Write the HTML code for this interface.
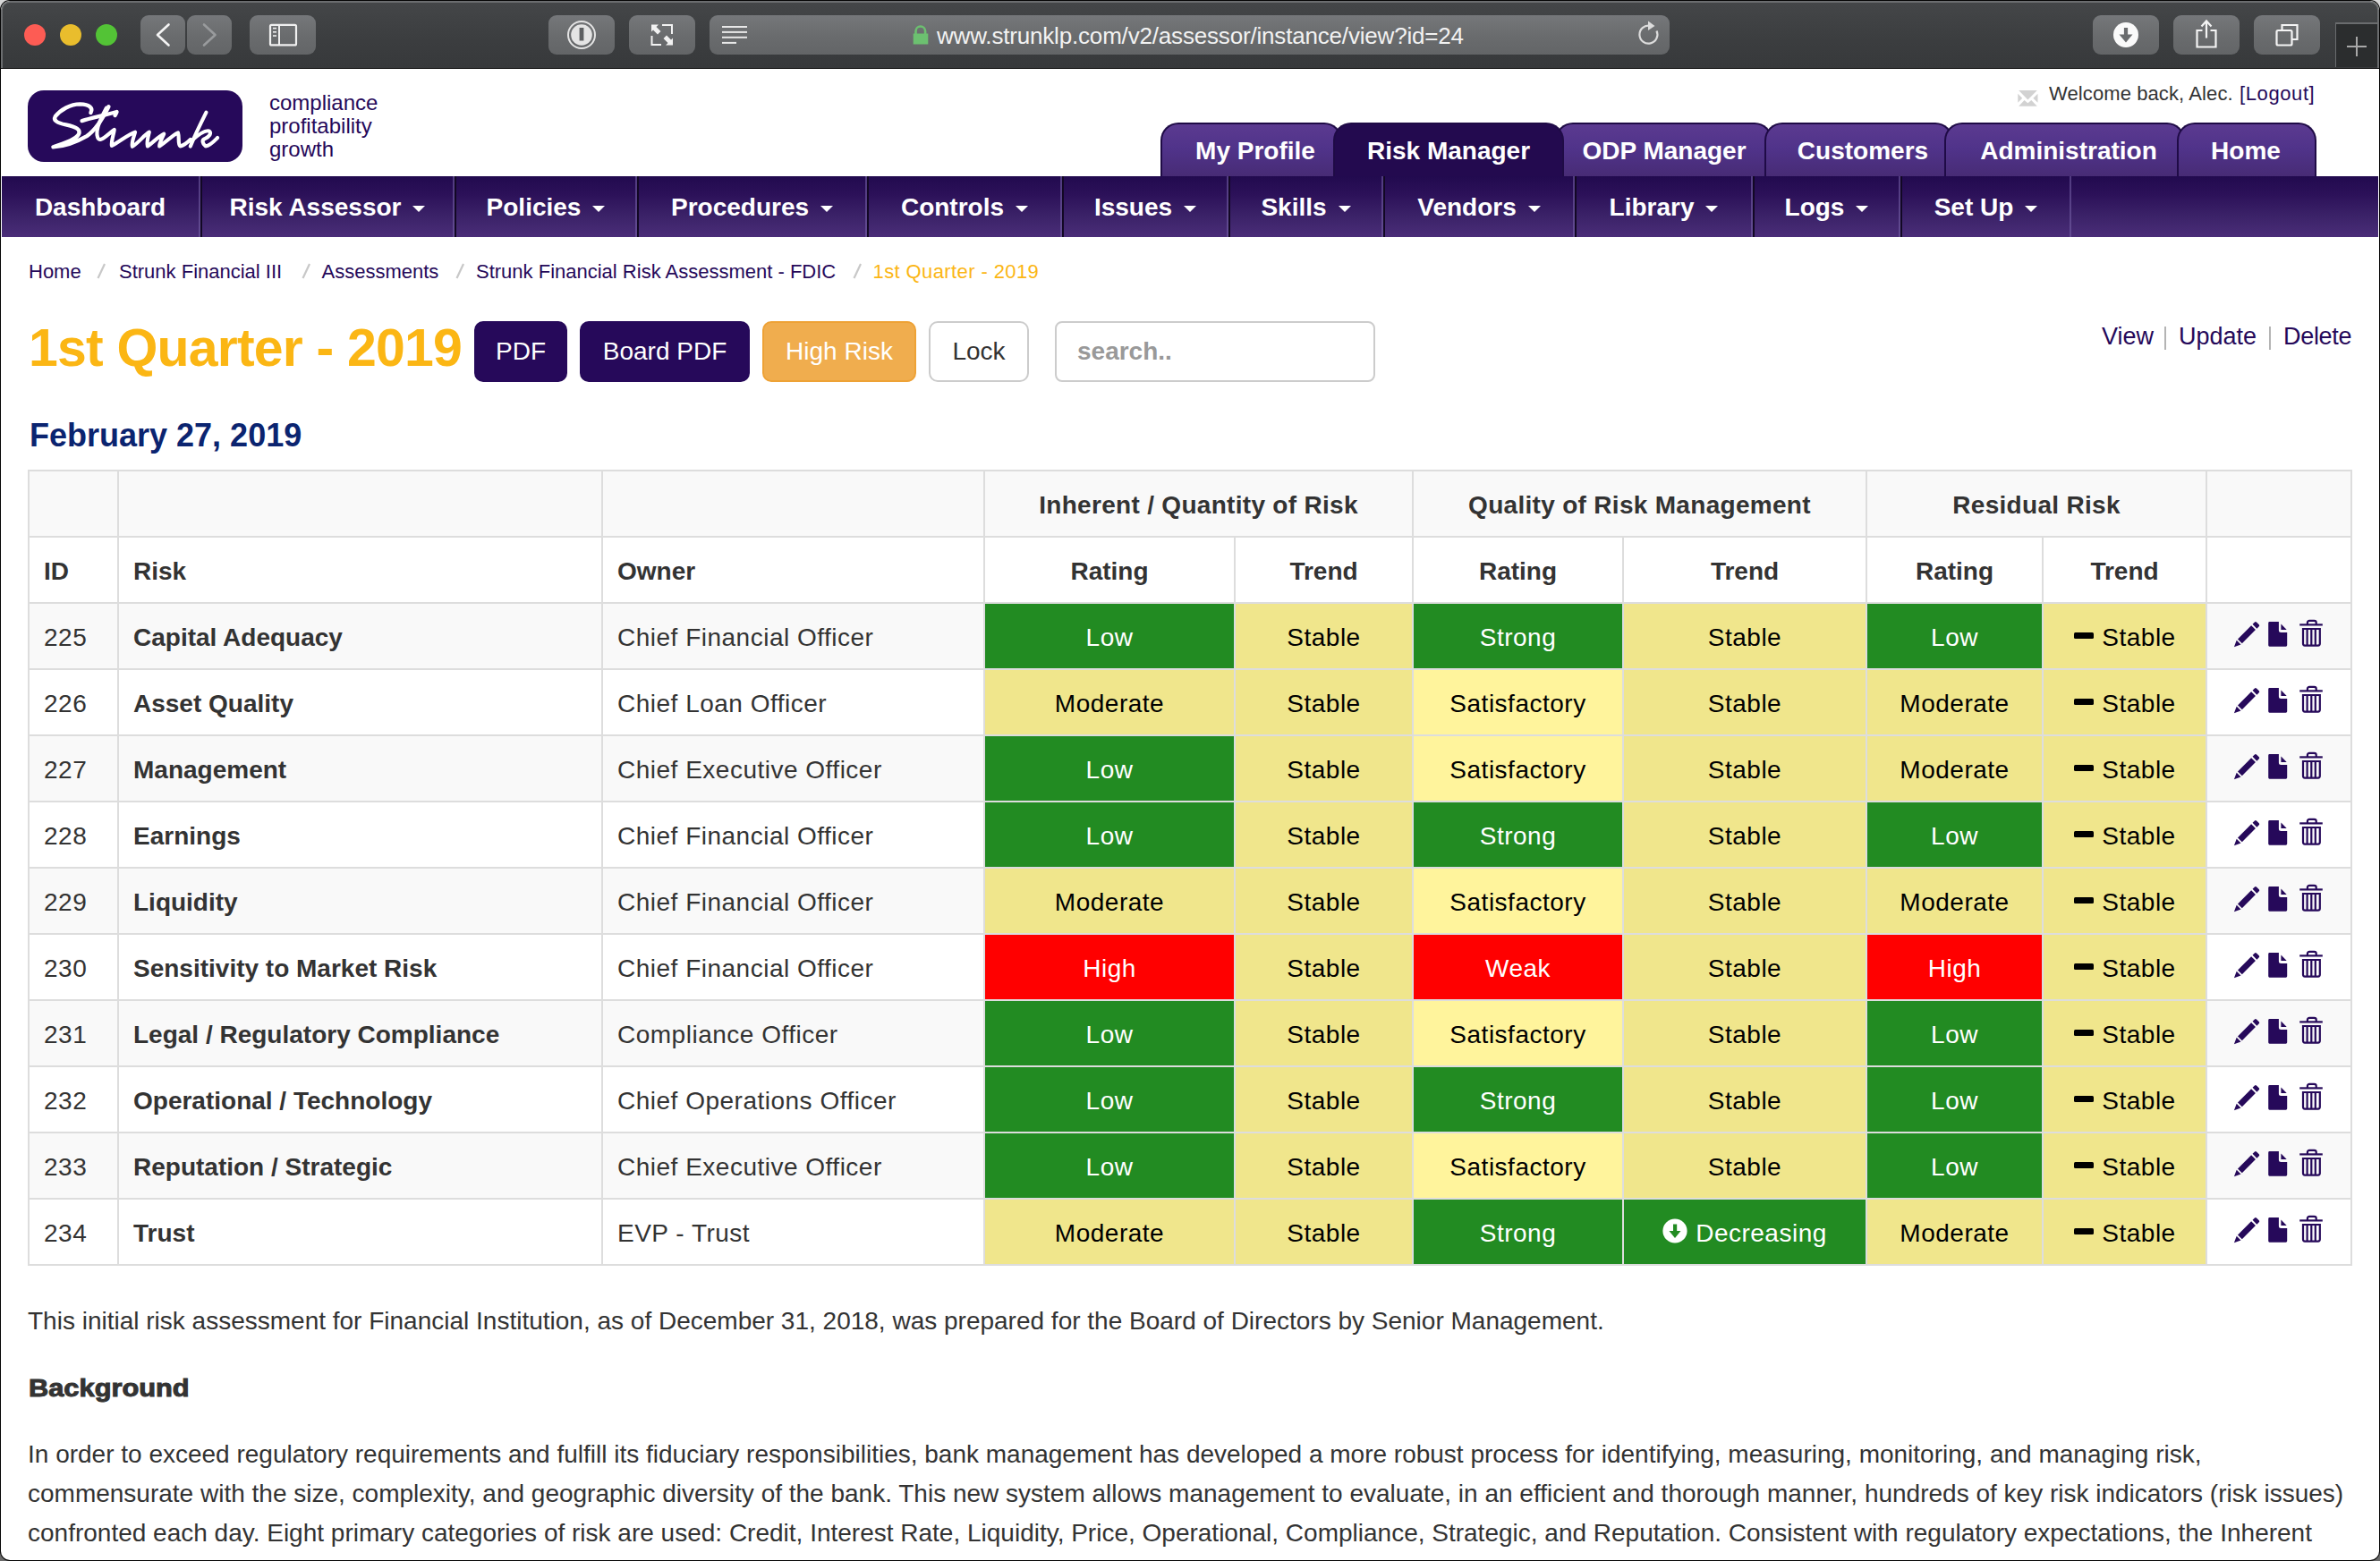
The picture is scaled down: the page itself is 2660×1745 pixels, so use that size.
<!DOCTYPE html><html><head><meta charset="utf-8"><title>Strunk</title>
<style>
html,body{margin:0;padding:0;}
body{width:2660px;height:1745px;overflow:hidden;position:relative;background:#6a6a6a;font-family:'Liberation Sans', sans-serif;}
.a{position:absolute;white-space:nowrap;}
</style></head><body>
<div class="a" style="left:0;top:0;width:30px;height:30px;background:#d8d8d8;"></div>
<div class="a" style="left:2630px;top:0;width:30px;height:30px;background:#d8d8d8;"></div>
<div class="a" style="left:0;top:0;width:2660px;height:1745px;background:#050505;border-radius:11px;"></div>
<div class="a" style="left:1px;top:1px;width:2658px;height:1743px;background:#fff;border-radius:10px;overflow:hidden;">
<div class="a" style="left:0;top:0;width:2658px;height:75px;background:linear-gradient(#444648,#3b3d3f 60%,#37393b);border:2px solid #6b6d6f;border-bottom:none;border-radius:10px 10px 0 0;box-sizing:border-box;"></div>
<div class="a" style="left:0;top:74.5px;width:2658px;height:1.8px;background:#111;"></div>
</div>
<div class="a" style="left:27px;top:27px;width:24px;height:24px;background:#fd5c54;border-radius:50%;"></div>
<div class="a" style="left:67px;top:27px;width:24px;height:24px;background:#e9bd2d;border-radius:50%;"></div>
<div class="a" style="left:107px;top:27px;width:24px;height:24px;background:#53c336;border-radius:50%;"></div>
<div class="a" style="left:157px;top:17px;width:50px;height:44px;background:linear-gradient(#75777a,#6a6c6e 50%,#636567);border-radius:9px;"></div>
<div class="a" style="left:209px;top:17px;width:50px;height:44px;background:linear-gradient(#75777a,#6a6c6e 50%,#636567);border-radius:9px;"></div>
<div class="a" style="left:279px;top:17px;width:74px;height:44px;background:linear-gradient(#75777a,#6a6c6e 50%,#636567);border-radius:9px;"></div>
<div class="a" style="left:613px;top:17px;width:74px;height:44px;background:linear-gradient(#75777a,#6a6c6e 50%,#636567);border-radius:9px;"></div>
<div class="a" style="left:703px;top:17px;width:74px;height:44px;background:linear-gradient(#75777a,#6a6c6e 50%,#636567);border-radius:9px;"></div>
<div class="a" style="left:793px;top:17px;width:1073px;height:44px;background:linear-gradient(#75777a,#6a6c6e 50%,#636567);border-radius:9px;"></div>
<div class="a" style="left:2339px;top:17px;width:74px;height:44px;background:linear-gradient(#75777a,#6a6c6e 50%,#636567);border-radius:9px;"></div>
<div class="a" style="left:2429px;top:17px;width:74px;height:44px;background:linear-gradient(#75777a,#6a6c6e 50%,#636567);border-radius:9px;"></div>
<div class="a" style="left:2519px;top:17px;width:74px;height:44px;background:linear-gradient(#75777a,#6a6c6e 50%,#636567);border-radius:9px;"></div>
<svg class="a" style="left:0;top:0" width="2660" height="80" viewBox="0 0 2660 80">
<polyline points="188.5,27.5 176,39 188.5,50.5" fill="none" stroke="#f4f4f4" stroke-width="2.6" stroke-linecap="round" stroke-linejoin="round"/>
<polyline points="228,27.5 240.5,39 228,50.5" fill="none" stroke="#999b9d" stroke-width="2.6" stroke-linecap="round" stroke-linejoin="round"/>
<rect x="302" y="27.8" width="29" height="22.6" rx="1.5" fill="none" stroke="#f0f0f0" stroke-width="2.2"/>
<line x1="312" y1="27.8" x2="312" y2="50.4" stroke="#f0f0f0" stroke-width="2"/>
<line x1="305" y1="31.6" x2="309" y2="31.6" stroke="#f0f0f0" stroke-width="1.6"/>
<line x1="305" y1="35.8" x2="309" y2="35.8" stroke="#f0f0f0" stroke-width="1.6"/>
<line x1="305" y1="40" x2="309" y2="40" stroke="#f0f0f0" stroke-width="1.6"/>
<circle cx="650" cy="39" r="15" fill="none" stroke="#e4e4e4" stroke-width="2"/>
<circle cx="650" cy="39" r="11.8" fill="#e4e4e4"/>
<rect x="647.6" y="31" width="4.8" height="14.5" fill="#5d5f61"/>
<g fill="none" stroke="#f2f2f2" stroke-width="2">
<polyline points="740,28 751,28 751,38"/>
<polyline points="728.5,40 728.5,50 739,50"/>
</g>
<polygon points="728,27.5 736,27.5 733.5,30 738.5,35 735,38.5 730,33.5 728,35.5" fill="#f2f2f2"/>
<polygon points="752,50.5 744,50.5 746.5,48 741.5,43 745,39.5 750,44.5 752,42.5" fill="#f2f2f2"/>
<g stroke="#e8e8e8" stroke-width="2">
<line x1="807" y1="30" x2="835" y2="30"/><line x1="807" y1="35.9" x2="835" y2="35.9"/>
<line x1="807" y1="41.8" x2="835" y2="41.8"/><line x1="807" y1="47.9" x2="823" y2="47.9"/>
</g>
<path d="M1023.5,38 v-3.2 a5.3,5.3 0 0 1 10.6,0 v3.2" fill="none" stroke="#6cc070" stroke-width="2.6"/>
<rect x="1020.7" y="37.5" width="16.6" height="12" fill="#6cc070"/>
<path d="M1851.5,34.5 A10,10 0 1 1 1844,28.8" fill="none" stroke="#dcdcdc" stroke-width="2.2"/>
<polygon points="1842,23.5 1849.5,29 1842,34" fill="#dcdcdc"/>
<circle cx="2376" cy="39" r="14" fill="#fafafa"/>
<rect x="2373.9" y="31" width="4.2" height="8.5" fill="#6a6c6e"/>
<polygon points="2368.5,38.5 2383.5,38.5 2376,47.5" fill="#6a6c6e"/>
<g fill="none" stroke="#f4f4f4" stroke-width="2.2">
<polyline points="2461.5,34 2455.5,34 2455.5,52.5 2476.5,52.5 2476.5,34 2470.5,34"/>
<line x1="2466" y1="24" x2="2466" y2="42.5"/>
<polyline points="2460.5,29.5 2466,23.5 2471.5,29.5"/>
<rect x="2544.5" y="34" width="17" height="16.5" rx="1.5"/>
<polyline points="2550.5,34 2550.5,28 2567.5,28 2567.5,44 2561.5,44"/>
</g>
</svg>
<div class="a" style="left:1047px;top:27.41px;font-size:26px;line-height:26px;color:#f2f2f2;font-weight:normal;letter-spacing:-0.18px;">www.strunklp.com/v2/assessor/instance/view?id=24</div>
<div class="a" style="left:2610px;top:25px;width:47px;height:50px;background:#2b2d2e;border-left:1px solid #6a6c6e;border-top:2px solid #6a6c6e;box-sizing:border-box;"></div>
<svg class="a" style="left:2610px;top:25px" width="47" height="50"><g stroke="#a8a8a8" stroke-width="2"><line x1="13" y1="27" x2="35" y2="27"/><line x1="24" y1="16" x2="24" y2="38"/></g></svg>
<div class="a" style="left:31px;top:101px;width:240px;height:80px;background:#26095a;border-radius:18px;"></div>
<svg class="a" style="left:50px;top:105px" width="200" height="70" viewBox="0 0 2380 833">
<g fill="none" stroke="#fff" stroke-width="52" stroke-linecap="round" stroke-linejoin="round">
<path d="M612,250 C645,190 600,138 470,135 C340,135 210,210 140,300 C112,350 160,385 280,410 C420,440 485,472 450,540 C410,610 250,662 112,705 C250,700 420,640 560,560 C680,480 770,330 850,170"/>
<path d="M495,358 C620,322 800,282 958,238 C950,260 940,275 935,285"/>
</g>
<g transform="translate(595,178.5) scale(0.75)" fill="none" stroke="#fff" stroke-width="66" stroke-linecap="round" stroke-linejoin="round">
<path d="M300,10 C240,120 150,280 135,420 C125,520 150,580 200,570 C280,540 360,450 440,395 C430,480 385,590 395,680 C520,620 700,470 810,440 C790,520 740,620 760,695 C860,640 980,480 1060,440 C1040,520 1010,620 1030,690 C1120,630 1230,510 1320,470 C1290,540 1230,650 1240,690 C1350,620 1480,490 1570,450 C1600,540 1560,650 1610,690 C1680,670 1740,620 1790,570"/>
<path d="M2070,90 C1990,250 1860,520 1790,690"/>
<path d="M1800,600 C1900,510 2050,400 2120,420 C2170,460 2130,520 2040,560 C1990,580 2000,640 2060,690 C2140,680 2220,590 2270,540"/>
</g></svg>
<div class="a" style="left:301px;top:102.57px;font-size:24px;line-height:24px;color:#26095a;font-weight:normal;">compliance</div>
<div class="a" style="left:301px;top:129.07px;font-size:24px;line-height:24px;color:#26095a;font-weight:normal;">profitability</div>
<div class="a" style="left:301px;top:154.57px;font-size:24px;line-height:24px;color:#26095a;font-weight:normal;">growth</div>
<svg class="a" style="left:2245px;top:90px" width="50" height="35" viewBox="0 0 50 35">
<g fill="#d2d2d2">
<polygon points="11.2,11 31.8,11 21.4,21.5"/>
<polygon points="10.3,14.8 15.2,19.7 10.3,24.7"/>
<polygon points="32.5,14.8 27.4,19.7 32.5,24.7"/>
<polygon points="11.2,28.7 17.5,22 21.4,25.3 25.3,22 31.8,28.7"/>
</g></svg>
<div class="a" style="left:2290px;top:94.23px;font-size:22px;line-height:22px;color:#333;font-weight:normal;letter-spacing:0.1px;">Welcome back, Alec.</div>
<div class="a" style="left:2503px;top:94.23px;font-size:22px;line-height:22px;color:#26095a;font-weight:normal;letter-spacing:0.6px;">[Logout]</div>
<div class="a" style="left:1297px;top:137px;width:203px;height:62px;background:linear-gradient(#5b3a90,#50338a 45%,#472b74);border:2px solid #1f0b46;border-bottom:none;border-radius:20px 20px 0 0;box-sizing:border-box;z-index:10;"></div>
<div class="a" style="left:1253.0px;width:300px;text-align:center;top:155.25px;font-size:28px;line-height:28px;color:#fff;font-weight:bold;z-index:10;">My Profile</div>
<div class="a" style="left:1738px;top:137px;width:243px;height:62px;background:linear-gradient(#5b3a90,#50338a 45%,#472b74);border:2px solid #1f0b46;border-bottom:none;border-radius:20px 20px 0 0;box-sizing:border-box;z-index:12;"></div>
<div class="a" style="left:1710.0px;width:300px;text-align:center;top:155.25px;font-size:28px;line-height:28px;color:#fff;font-weight:bold;z-index:12;">ODP Manager</div>
<div class="a" style="left:1972px;top:137px;width:211px;height:62px;background:linear-gradient(#5b3a90,#50338a 45%,#472b74);border:2px solid #1f0b46;border-bottom:none;border-radius:20px 20px 0 0;box-sizing:border-box;z-index:13;"></div>
<div class="a" style="left:1932.0px;width:300px;text-align:center;top:155.25px;font-size:28px;line-height:28px;color:#fff;font-weight:bold;z-index:13;">Customers</div>
<div class="a" style="left:2173px;top:137px;width:269px;height:62px;background:linear-gradient(#5b3a90,#50338a 45%,#472b74);border:2px solid #1f0b46;border-bottom:none;border-radius:20px 20px 0 0;box-sizing:border-box;z-index:14;"></div>
<div class="a" style="left:2162.0px;width:300px;text-align:center;top:155.25px;font-size:28px;line-height:28px;color:#fff;font-weight:bold;z-index:14;">Administration</div>
<div class="a" style="left:2433px;top:137px;width:156px;height:62px;background:linear-gradient(#5b3a90,#50338a 45%,#472b74);border:2px solid #1f0b46;border-bottom:none;border-radius:20px 20px 0 0;box-sizing:border-box;z-index:15;"></div>
<div class="a" style="left:2360.0px;width:300px;text-align:center;top:155.25px;font-size:28px;line-height:28px;color:#fff;font-weight:bold;z-index:15;">Home</div>
<div class="a" style="left:1490px;top:137px;width:258px;height:62px;background:#230a4f;border:2px solid #1f0b46;border-bottom:none;border-radius:20px 20px 0 0;box-sizing:border-box;z-index:20;"></div>
<div class="a" style="left:1469.0px;width:300px;text-align:center;top:155.25px;font-size:28px;line-height:28px;color:#fff;font-weight:bold;z-index:20;">Risk Manager</div>
<div class="a" style="left:2px;top:197px;width:2656px;height:68px;background:linear-gradient(#220a4f,#2c1159 30%,#3b2268 65%,#4a2d78);z-index:30;"></div>
<div class="a" style="left:222px;top:197px;width:2px;height:68px;background:rgba(120,100,170,0.55);z-index:31;"></div>
<div class="a" style="left:224px;top:197px;width:2px;height:68px;background:#120824;z-index:31;"></div>
<div class="a" style="left:506px;top:197px;width:2px;height:68px;background:rgba(120,100,170,0.55);z-index:31;"></div>
<div class="a" style="left:508px;top:197px;width:2px;height:68px;background:#120824;z-index:31;"></div>
<div class="a" style="left:710px;top:197px;width:2px;height:68px;background:rgba(120,100,170,0.55);z-index:31;"></div>
<div class="a" style="left:712px;top:197px;width:2px;height:68px;background:#120824;z-index:31;"></div>
<div class="a" style="left:967px;top:197px;width:2px;height:68px;background:rgba(120,100,170,0.55);z-index:31;"></div>
<div class="a" style="left:969px;top:197px;width:2px;height:68px;background:#120824;z-index:31;"></div>
<div class="a" style="left:1185px;top:197px;width:2px;height:68px;background:rgba(120,100,170,0.55);z-index:31;"></div>
<div class="a" style="left:1187px;top:197px;width:2px;height:68px;background:#120824;z-index:31;"></div>
<div class="a" style="left:1371px;top:197px;width:2px;height:68px;background:rgba(120,100,170,0.55);z-index:31;"></div>
<div class="a" style="left:1373px;top:197px;width:2px;height:68px;background:#120824;z-index:31;"></div>
<div class="a" style="left:1544px;top:197px;width:2px;height:68px;background:rgba(120,100,170,0.55);z-index:31;"></div>
<div class="a" style="left:1546px;top:197px;width:2px;height:68px;background:#120824;z-index:31;"></div>
<div class="a" style="left:1758px;top:197px;width:2px;height:68px;background:rgba(120,100,170,0.55);z-index:31;"></div>
<div class="a" style="left:1760px;top:197px;width:2px;height:68px;background:#120824;z-index:31;"></div>
<div class="a" style="left:1957px;top:197px;width:2px;height:68px;background:rgba(120,100,170,0.55);z-index:31;"></div>
<div class="a" style="left:1959px;top:197px;width:2px;height:68px;background:#120824;z-index:31;"></div>
<div class="a" style="left:2122px;top:197px;width:2px;height:68px;background:rgba(120,100,170,0.55);z-index:31;"></div>
<div class="a" style="left:2124px;top:197px;width:2px;height:68px;background:#120824;z-index:31;"></div>
<div class="a" style="left:2313px;top:197px;width:2px;height:68px;background:rgba(120,100,170,0.55);z-index:31;"></div>
<div class="a" style="left:2.0px;width:220px;text-align:center;top:218.25px;font-size:28px;line-height:28px;color:#fff;font-weight:bold;z-index:32;">Dashboard</div>
<div class="a" style="left:226.0px;width:280px;text-align:center;top:218.25px;font-size:28px;line-height:28px;color:#fff;font-weight:bold;z-index:32;">Risk Assessor<span style="display:inline-block;width:0;height:0;border-left:7px solid transparent;border-right:7px solid transparent;border-top:7.5px solid #fff;margin-left:13px;vertical-align:4px;"></span></div>
<div class="a" style="left:510.0px;width:200px;text-align:center;top:218.25px;font-size:28px;line-height:28px;color:#fff;font-weight:bold;z-index:32;">Policies<span style="display:inline-block;width:0;height:0;border-left:7px solid transparent;border-right:7px solid transparent;border-top:7.5px solid #fff;margin-left:13px;vertical-align:4px;"></span></div>
<div class="a" style="left:714.0px;width:253px;text-align:center;top:218.25px;font-size:28px;line-height:28px;color:#fff;font-weight:bold;z-index:32;">Procedures<span style="display:inline-block;width:0;height:0;border-left:7px solid transparent;border-right:7px solid transparent;border-top:7.5px solid #fff;margin-left:13px;vertical-align:4px;"></span></div>
<div class="a" style="left:971.0px;width:214px;text-align:center;top:218.25px;font-size:28px;line-height:28px;color:#fff;font-weight:bold;z-index:32;">Controls<span style="display:inline-block;width:0;height:0;border-left:7px solid transparent;border-right:7px solid transparent;border-top:7.5px solid #fff;margin-left:13px;vertical-align:4px;"></span></div>
<div class="a" style="left:1189.0px;width:182px;text-align:center;top:218.25px;font-size:28px;line-height:28px;color:#fff;font-weight:bold;z-index:32;">Issues<span style="display:inline-block;width:0;height:0;border-left:7px solid transparent;border-right:7px solid transparent;border-top:7.5px solid #fff;margin-left:13px;vertical-align:4px;"></span></div>
<div class="a" style="left:1375.0px;width:169px;text-align:center;top:218.25px;font-size:28px;line-height:28px;color:#fff;font-weight:bold;z-index:32;">Skills<span style="display:inline-block;width:0;height:0;border-left:7px solid transparent;border-right:7px solid transparent;border-top:7.5px solid #fff;margin-left:13px;vertical-align:4px;"></span></div>
<div class="a" style="left:1548.0px;width:210px;text-align:center;top:218.25px;font-size:28px;line-height:28px;color:#fff;font-weight:bold;z-index:32;">Vendors<span style="display:inline-block;width:0;height:0;border-left:7px solid transparent;border-right:7px solid transparent;border-top:7.5px solid #fff;margin-left:13px;vertical-align:4px;"></span></div>
<div class="a" style="left:1762.0px;width:195px;text-align:center;top:218.25px;font-size:28px;line-height:28px;color:#fff;font-weight:bold;z-index:32;">Library<span style="display:inline-block;width:0;height:0;border-left:7px solid transparent;border-right:7px solid transparent;border-top:7.5px solid #fff;margin-left:13px;vertical-align:4px;"></span></div>
<div class="a" style="left:1961.0px;width:161px;text-align:center;top:218.25px;font-size:28px;line-height:28px;color:#fff;font-weight:bold;z-index:32;">Logs<span style="display:inline-block;width:0;height:0;border-left:7px solid transparent;border-right:7px solid transparent;border-top:7.5px solid #fff;margin-left:13px;vertical-align:4px;"></span></div>
<div class="a" style="left:2126.0px;width:187px;text-align:center;top:218.25px;font-size:28px;line-height:28px;color:#fff;font-weight:bold;z-index:32;">Set Up<span style="display:inline-block;width:0;height:0;border-left:7px solid transparent;border-right:7px solid transparent;border-top:7.5px solid #fff;margin-left:13px;vertical-align:4px;"></span></div>
<div class="a" style="left:32px;top:292.73px;font-size:22px;line-height:22px;color:#26095a;font-weight:normal;">Home</div>
<svg class="a" style="left:108px;top:292px" width="12" height="22"><line x1="1.5" y1="19" x2="9" y2="3" stroke="#c8c8c8" stroke-width="2.2"/></svg>
<div class="a" style="left:133px;top:292.73px;font-size:22px;line-height:22px;color:#26095a;font-weight:normal;">Strunk Financial III</div>
<svg class="a" style="left:337px;top:292px" width="12" height="22"><line x1="1.5" y1="19" x2="9" y2="3" stroke="#c8c8c8" stroke-width="2.2"/></svg>
<div class="a" style="left:359.5px;top:292.73px;font-size:22px;line-height:22px;color:#26095a;font-weight:normal;">Assessments</div>
<svg class="a" style="left:509px;top:292px" width="12" height="22"><line x1="1.5" y1="19" x2="9" y2="3" stroke="#c8c8c8" stroke-width="2.2"/></svg>
<div class="a" style="left:532px;top:292.73px;font-size:22px;line-height:22px;color:#26095a;font-weight:normal;">Strunk Financial Risk Assessment - FDIC</div>
<svg class="a" style="left:953px;top:292px" width="12" height="22"><line x1="1.5" y1="19" x2="9" y2="3" stroke="#c8c8c8" stroke-width="2.2"/></svg>
<div class="a" style="left:975.5px;top:292.73px;font-size:22px;line-height:22px;color:#fbb614;font-weight:normal;letter-spacing:0.4px;">1st Quarter - 2019</div>
<div class="a" style="left:32px;top:360.00px;font-size:59px;line-height:59px;color:#fbb614;font-weight:bold;letter-spacing:-0.8px;">1st Quarter - 2019</div>
<div class="a" style="left:530px;top:359px;width:104px;height:68px;background:#26095a;border:2px solid #26095a;border-radius:10px;box-sizing:border-box;"></div>
<div class="a" style="left:530.0px;width:104px;text-align:center;top:378.75px;font-size:28px;line-height:28px;color:#fff;font-weight:normal;">PDF</div>
<div class="a" style="left:648px;top:359px;width:190px;height:68px;background:#26095a;border:2px solid #26095a;border-radius:10px;box-sizing:border-box;"></div>
<div class="a" style="left:648.0px;width:190px;text-align:center;top:378.75px;font-size:28px;line-height:28px;color:#fff;font-weight:normal;">Board PDF</div>
<div class="a" style="left:852px;top:359px;width:172px;height:68px;background:#f0ad4e;border:2px solid #eea236;border-radius:10px;box-sizing:border-box;"></div>
<div class="a" style="left:852.0px;width:172px;text-align:center;top:378.75px;font-size:28px;line-height:28px;color:#fff;font-weight:normal;">High Risk</div>
<div class="a" style="left:1038px;top:359px;width:112px;height:68px;background:#fff;border:2px solid #ccc;border-radius:10px;box-sizing:border-box;"></div>
<div class="a" style="left:1038.0px;width:112px;text-align:center;top:378.75px;font-size:28px;line-height:28px;color:#333;font-weight:normal;">Lock</div>
<div class="a" style="left:1179px;top:359px;width:358px;height:68px;background:#fff;border:2px solid #ccc;border-radius:8px;box-sizing:border-box;"></div>
<div class="a" style="left:1204px;top:378.75px;font-size:28px;line-height:28px;color:#999;font-weight:bold;">search..</div>
<div class="a" style="left:2349px;top:363.08px;font-size:27px;line-height:27px;color:#26095a;font-weight:normal;">View</div>
<div class="a" style="left:2418.5px;top:365px;width:2.0px;height:26px;background:#b4b4b4;"></div>
<div class="a" style="left:2435px;top:363.08px;font-size:27px;line-height:27px;color:#26095a;font-weight:normal;">Update</div>
<div class="a" style="left:2535.5px;top:365px;width:2.0px;height:26px;background:#b4b4b4;"></div>
<div class="a" style="left:2552px;top:363.08px;font-size:27px;line-height:27px;color:#26095a;font-weight:normal;letter-spacing:-0.3px;">Delete</div>
<div class="a" style="left:33px;top:469.10px;font-size:36px;line-height:36px;color:#0b2470;font-weight:bold;">February 27, 2019</div>
<div class="a" style="left:31px;top:525px;width:2598px;height:890px;background:#ddd;"></div>
<div class="a" style="left:33px;top:527px;width:98px;height:72px;background:#f9f9f9;"></div>
<div class="a" style="left:133px;top:527px;width:539px;height:72px;background:#f9f9f9;"></div>
<div class="a" style="left:674px;top:527px;width:425px;height:72px;background:#f9f9f9;"></div>
<div class="a" style="left:1101px;top:527px;width:477px;height:72px;background:#f9f9f9;"></div>
<div class="a" style="left:1580px;top:527px;width:505px;height:72px;background:#f9f9f9;"></div>
<div class="a" style="left:2087px;top:527px;width:378px;height:72px;background:#f9f9f9;"></div>
<div class="a" style="left:2467px;top:527px;width:160px;height:72px;background:#f9f9f9;"></div>
<div class="a" style="left:1101.0px;width:477px;text-align:center;top:551.25px;font-size:28px;line-height:28px;color:#333;font-weight:bold;letter-spacing:0.3px;">Inherent / Quantity of Risk</div>
<div class="a" style="left:1580.0px;width:505px;text-align:center;top:551.25px;font-size:28px;line-height:28px;color:#333;font-weight:bold;letter-spacing:0.3px;">Quality of Risk Management</div>
<div class="a" style="left:2087.0px;width:378px;text-align:center;top:551.25px;font-size:28px;line-height:28px;color:#333;font-weight:bold;letter-spacing:0.3px;">Residual Risk</div>
<div class="a" style="left:33px;top:601px;width:98px;height:72px;background:#fff;"></div>
<div class="a" style="left:133px;top:601px;width:539px;height:72px;background:#fff;"></div>
<div class="a" style="left:674px;top:601px;width:425px;height:72px;background:#fff;"></div>
<div class="a" style="left:1101px;top:601px;width:278px;height:72px;background:#fff;"></div>
<div class="a" style="left:1381px;top:601px;width:197px;height:72px;background:#fff;"></div>
<div class="a" style="left:1580px;top:601px;width:233px;height:72px;background:#fff;"></div>
<div class="a" style="left:1815px;top:601px;width:270px;height:72px;background:#fff;"></div>
<div class="a" style="left:2087px;top:601px;width:195px;height:72px;background:#fff;"></div>
<div class="a" style="left:2284px;top:601px;width:181px;height:72px;background:#fff;"></div>
<div class="a" style="left:2467px;top:601px;width:160px;height:72px;background:#fff;"></div>
<div class="a" style="left:49px;top:625.25px;font-size:28px;line-height:28px;color:#333;font-weight:bold;">ID</div>
<div class="a" style="left:149px;top:625.25px;font-size:28px;line-height:28px;color:#333;font-weight:bold;">Risk</div>
<div class="a" style="left:690px;top:625.25px;font-size:28px;line-height:28px;color:#333;font-weight:bold;">Owner</div>
<div class="a" style="left:1101.0px;width:278px;text-align:center;top:625.25px;font-size:28px;line-height:28px;color:#333;font-weight:bold;">Rating</div>
<div class="a" style="left:1381.0px;width:197px;text-align:center;top:625.25px;font-size:28px;line-height:28px;color:#333;font-weight:bold;">Trend</div>
<div class="a" style="left:1580.0px;width:233px;text-align:center;top:625.25px;font-size:28px;line-height:28px;color:#333;font-weight:bold;">Rating</div>
<div class="a" style="left:1815.0px;width:270px;text-align:center;top:625.25px;font-size:28px;line-height:28px;color:#333;font-weight:bold;">Trend</div>
<div class="a" style="left:2087.0px;width:195px;text-align:center;top:625.25px;font-size:28px;line-height:28px;color:#333;font-weight:bold;">Rating</div>
<div class="a" style="left:2284.0px;width:181px;text-align:center;top:625.25px;font-size:28px;line-height:28px;color:#333;font-weight:bold;">Trend</div>
<div class="a" style="left:33px;top:675px;width:98px;height:72px;background:#f9f9f9;"></div>
<div class="a" style="left:133px;top:675px;width:539px;height:72px;background:#f9f9f9;"></div>
<div class="a" style="left:674px;top:675px;width:425px;height:72px;background:#f9f9f9;"></div>
<div class="a" style="left:2467px;top:675px;width:160px;height:72px;background:#f9f9f9;"></div>
<div class="a" style="left:49px;top:699.25px;font-size:28px;line-height:28px;color:#333;font-weight:normal;letter-spacing:0.5px;">225</div>
<div class="a" style="left:149px;top:699.25px;font-size:28px;line-height:28px;color:#333;font-weight:bold;">Capital Adequacy</div>
<div class="a" style="left:690px;top:699.25px;font-size:28px;line-height:28px;color:#333;font-weight:normal;letter-spacing:0.5px;">Chief Financial Officer</div>
<div class="a" style="left:1101px;top:675px;width:278px;height:72px;background:#228b22;"></div>
<div class="a" style="left:1101.0px;width:278px;text-align:center;top:699.25px;font-size:28px;line-height:28px;color:#fff;font-weight:normal;letter-spacing:0.5px;">Low</div>
<div class="a" style="left:1381px;top:675px;width:197px;height:72px;background:#f0e68c;"></div>
<div class="a" style="left:1381.0px;width:197px;text-align:center;top:699.25px;font-size:28px;line-height:28px;color:#000;font-weight:normal;letter-spacing:0.5px;">Stable</div>
<div class="a" style="left:1580px;top:675px;width:233px;height:72px;background:#228b22;"></div>
<div class="a" style="left:1580.0px;width:233px;text-align:center;top:699.25px;font-size:28px;line-height:28px;color:#fff;font-weight:normal;letter-spacing:0.5px;">Strong</div>
<div class="a" style="left:1815px;top:675px;width:270px;height:72px;background:#f0e68c;"></div>
<div class="a" style="left:1815.0px;width:270px;text-align:center;top:699.25px;font-size:28px;line-height:28px;color:#000;font-weight:normal;letter-spacing:0.5px;">Stable</div>
<div class="a" style="left:2087px;top:675px;width:195px;height:72px;background:#228b22;"></div>
<div class="a" style="left:2087.0px;width:195px;text-align:center;top:699.25px;font-size:28px;line-height:28px;color:#fff;font-weight:normal;letter-spacing:0.5px;">Low</div>
<div class="a" style="left:2284px;top:675px;width:181px;height:72px;background:#f0e68c;"></div>
<div class="a" style="left:2284.0px;width:181px;text-align:center;top:699.25px;font-size:28px;line-height:28px;color:#000;font-weight:normal;letter-spacing:0.5px;"><span style="position:relative;display:inline-block;width:32px;height:1px;"><span style="position:absolute;left:1px;top:-14.5px;width:22px;height:7px;background:#000;border-radius:1.5px;"></span></span>Stable</div>
<svg class="a" style="left:2490px;top:690px" width="110" height="40" viewBox="0 0 110 40"><g fill="#26095a"><g transform="translate(6.9,33.3) rotate(-45)"><polygon points="0,0 7.4,-3.4 7.4,3.4"/><rect x="9.2" y="-3.4" width="21.4" height="6.8"/><path d="M32.6,-3.4 h3.4 a1.4,1.4 0 0 1 1.4,1.4 v4 a1.4,1.4 0 0 1 -1.4,1.4 h-3.4 z"/></g><path d="M45.2,6.5 a1.4,1.4 0 0 1 1.4,-1.4 H56.9 V14.4 a2.5,2.5 0 0 0 2.5,2.5 H66.2 V31.3 a1.4,1.4 0 0 1 -1.4,1.4 H46.6 a1.4,1.4 0 0 1 -1.4,-1.4 Z"/><polygon points="59.4,7.6 65.7,13.9 59.4,13.9"/></g><g fill="none" stroke="#26095a" stroke-width="2.2"><line x1="80.2" y1="8.4" x2="105.8" y2="8.4"/><path d="M88.9,8 V6 a2.2,2.2 0 0 1 2.2,-2.2 h5.4 a2.2,2.2 0 0 1 2.2,2.2 V8"/><path d="M84,13 H102.8 V29.6 a2,2 0 0 1 -2,2 H86 a2,2 0 0 1 -2,-2 Z"/></g><g fill="#26095a"><rect x="87.5" y="13" width="2.2" height="18"/><rect x="92.2" y="13" width="2.2" height="18"/><rect x="96.7" y="13" width="2.2" height="18"/></g></svg>
<div class="a" style="left:33px;top:749px;width:98px;height:72px;background:#fff;"></div>
<div class="a" style="left:133px;top:749px;width:539px;height:72px;background:#fff;"></div>
<div class="a" style="left:674px;top:749px;width:425px;height:72px;background:#fff;"></div>
<div class="a" style="left:2467px;top:749px;width:160px;height:72px;background:#fff;"></div>
<div class="a" style="left:49px;top:773.25px;font-size:28px;line-height:28px;color:#333;font-weight:normal;letter-spacing:0.5px;">226</div>
<div class="a" style="left:149px;top:773.25px;font-size:28px;line-height:28px;color:#333;font-weight:bold;">Asset Quality</div>
<div class="a" style="left:690px;top:773.25px;font-size:28px;line-height:28px;color:#333;font-weight:normal;letter-spacing:0.5px;">Chief Loan Officer</div>
<div class="a" style="left:1101px;top:749px;width:278px;height:72px;background:#f0e68c;"></div>
<div class="a" style="left:1101.0px;width:278px;text-align:center;top:773.25px;font-size:28px;line-height:28px;color:#000;font-weight:normal;letter-spacing:0.5px;">Moderate</div>
<div class="a" style="left:1381px;top:749px;width:197px;height:72px;background:#f0e68c;"></div>
<div class="a" style="left:1381.0px;width:197px;text-align:center;top:773.25px;font-size:28px;line-height:28px;color:#000;font-weight:normal;letter-spacing:0.5px;">Stable</div>
<div class="a" style="left:1580px;top:749px;width:233px;height:72px;background:#fff49c;"></div>
<div class="a" style="left:1580.0px;width:233px;text-align:center;top:773.25px;font-size:28px;line-height:28px;color:#000;font-weight:normal;letter-spacing:0.5px;">Satisfactory</div>
<div class="a" style="left:1815px;top:749px;width:270px;height:72px;background:#f0e68c;"></div>
<div class="a" style="left:1815.0px;width:270px;text-align:center;top:773.25px;font-size:28px;line-height:28px;color:#000;font-weight:normal;letter-spacing:0.5px;">Stable</div>
<div class="a" style="left:2087px;top:749px;width:195px;height:72px;background:#f0e68c;"></div>
<div class="a" style="left:2087.0px;width:195px;text-align:center;top:773.25px;font-size:28px;line-height:28px;color:#000;font-weight:normal;letter-spacing:0.5px;">Moderate</div>
<div class="a" style="left:2284px;top:749px;width:181px;height:72px;background:#f0e68c;"></div>
<div class="a" style="left:2284.0px;width:181px;text-align:center;top:773.25px;font-size:28px;line-height:28px;color:#000;font-weight:normal;letter-spacing:0.5px;"><span style="position:relative;display:inline-block;width:32px;height:1px;"><span style="position:absolute;left:1px;top:-14.5px;width:22px;height:7px;background:#000;border-radius:1.5px;"></span></span>Stable</div>
<svg class="a" style="left:2490px;top:764px" width="110" height="40" viewBox="0 0 110 40"><g fill="#26095a"><g transform="translate(6.9,33.3) rotate(-45)"><polygon points="0,0 7.4,-3.4 7.4,3.4"/><rect x="9.2" y="-3.4" width="21.4" height="6.8"/><path d="M32.6,-3.4 h3.4 a1.4,1.4 0 0 1 1.4,1.4 v4 a1.4,1.4 0 0 1 -1.4,1.4 h-3.4 z"/></g><path d="M45.2,6.5 a1.4,1.4 0 0 1 1.4,-1.4 H56.9 V14.4 a2.5,2.5 0 0 0 2.5,2.5 H66.2 V31.3 a1.4,1.4 0 0 1 -1.4,1.4 H46.6 a1.4,1.4 0 0 1 -1.4,-1.4 Z"/><polygon points="59.4,7.6 65.7,13.9 59.4,13.9"/></g><g fill="none" stroke="#26095a" stroke-width="2.2"><line x1="80.2" y1="8.4" x2="105.8" y2="8.4"/><path d="M88.9,8 V6 a2.2,2.2 0 0 1 2.2,-2.2 h5.4 a2.2,2.2 0 0 1 2.2,2.2 V8"/><path d="M84,13 H102.8 V29.6 a2,2 0 0 1 -2,2 H86 a2,2 0 0 1 -2,-2 Z"/></g><g fill="#26095a"><rect x="87.5" y="13" width="2.2" height="18"/><rect x="92.2" y="13" width="2.2" height="18"/><rect x="96.7" y="13" width="2.2" height="18"/></g></svg>
<div class="a" style="left:33px;top:823px;width:98px;height:72px;background:#f9f9f9;"></div>
<div class="a" style="left:133px;top:823px;width:539px;height:72px;background:#f9f9f9;"></div>
<div class="a" style="left:674px;top:823px;width:425px;height:72px;background:#f9f9f9;"></div>
<div class="a" style="left:2467px;top:823px;width:160px;height:72px;background:#f9f9f9;"></div>
<div class="a" style="left:49px;top:847.25px;font-size:28px;line-height:28px;color:#333;font-weight:normal;letter-spacing:0.5px;">227</div>
<div class="a" style="left:149px;top:847.25px;font-size:28px;line-height:28px;color:#333;font-weight:bold;">Management</div>
<div class="a" style="left:690px;top:847.25px;font-size:28px;line-height:28px;color:#333;font-weight:normal;letter-spacing:0.5px;">Chief Executive Officer</div>
<div class="a" style="left:1101px;top:823px;width:278px;height:72px;background:#228b22;"></div>
<div class="a" style="left:1101.0px;width:278px;text-align:center;top:847.25px;font-size:28px;line-height:28px;color:#fff;font-weight:normal;letter-spacing:0.5px;">Low</div>
<div class="a" style="left:1381px;top:823px;width:197px;height:72px;background:#f0e68c;"></div>
<div class="a" style="left:1381.0px;width:197px;text-align:center;top:847.25px;font-size:28px;line-height:28px;color:#000;font-weight:normal;letter-spacing:0.5px;">Stable</div>
<div class="a" style="left:1580px;top:823px;width:233px;height:72px;background:#fff49c;"></div>
<div class="a" style="left:1580.0px;width:233px;text-align:center;top:847.25px;font-size:28px;line-height:28px;color:#000;font-weight:normal;letter-spacing:0.5px;">Satisfactory</div>
<div class="a" style="left:1815px;top:823px;width:270px;height:72px;background:#f0e68c;"></div>
<div class="a" style="left:1815.0px;width:270px;text-align:center;top:847.25px;font-size:28px;line-height:28px;color:#000;font-weight:normal;letter-spacing:0.5px;">Stable</div>
<div class="a" style="left:2087px;top:823px;width:195px;height:72px;background:#f0e68c;"></div>
<div class="a" style="left:2087.0px;width:195px;text-align:center;top:847.25px;font-size:28px;line-height:28px;color:#000;font-weight:normal;letter-spacing:0.5px;">Moderate</div>
<div class="a" style="left:2284px;top:823px;width:181px;height:72px;background:#f0e68c;"></div>
<div class="a" style="left:2284.0px;width:181px;text-align:center;top:847.25px;font-size:28px;line-height:28px;color:#000;font-weight:normal;letter-spacing:0.5px;"><span style="position:relative;display:inline-block;width:32px;height:1px;"><span style="position:absolute;left:1px;top:-14.5px;width:22px;height:7px;background:#000;border-radius:1.5px;"></span></span>Stable</div>
<svg class="a" style="left:2490px;top:838px" width="110" height="40" viewBox="0 0 110 40"><g fill="#26095a"><g transform="translate(6.9,33.3) rotate(-45)"><polygon points="0,0 7.4,-3.4 7.4,3.4"/><rect x="9.2" y="-3.4" width="21.4" height="6.8"/><path d="M32.6,-3.4 h3.4 a1.4,1.4 0 0 1 1.4,1.4 v4 a1.4,1.4 0 0 1 -1.4,1.4 h-3.4 z"/></g><path d="M45.2,6.5 a1.4,1.4 0 0 1 1.4,-1.4 H56.9 V14.4 a2.5,2.5 0 0 0 2.5,2.5 H66.2 V31.3 a1.4,1.4 0 0 1 -1.4,1.4 H46.6 a1.4,1.4 0 0 1 -1.4,-1.4 Z"/><polygon points="59.4,7.6 65.7,13.9 59.4,13.9"/></g><g fill="none" stroke="#26095a" stroke-width="2.2"><line x1="80.2" y1="8.4" x2="105.8" y2="8.4"/><path d="M88.9,8 V6 a2.2,2.2 0 0 1 2.2,-2.2 h5.4 a2.2,2.2 0 0 1 2.2,2.2 V8"/><path d="M84,13 H102.8 V29.6 a2,2 0 0 1 -2,2 H86 a2,2 0 0 1 -2,-2 Z"/></g><g fill="#26095a"><rect x="87.5" y="13" width="2.2" height="18"/><rect x="92.2" y="13" width="2.2" height="18"/><rect x="96.7" y="13" width="2.2" height="18"/></g></svg>
<div class="a" style="left:33px;top:897px;width:98px;height:72px;background:#fff;"></div>
<div class="a" style="left:133px;top:897px;width:539px;height:72px;background:#fff;"></div>
<div class="a" style="left:674px;top:897px;width:425px;height:72px;background:#fff;"></div>
<div class="a" style="left:2467px;top:897px;width:160px;height:72px;background:#fff;"></div>
<div class="a" style="left:49px;top:921.25px;font-size:28px;line-height:28px;color:#333;font-weight:normal;letter-spacing:0.5px;">228</div>
<div class="a" style="left:149px;top:921.25px;font-size:28px;line-height:28px;color:#333;font-weight:bold;">Earnings</div>
<div class="a" style="left:690px;top:921.25px;font-size:28px;line-height:28px;color:#333;font-weight:normal;letter-spacing:0.5px;">Chief Financial Officer</div>
<div class="a" style="left:1101px;top:897px;width:278px;height:72px;background:#228b22;"></div>
<div class="a" style="left:1101.0px;width:278px;text-align:center;top:921.25px;font-size:28px;line-height:28px;color:#fff;font-weight:normal;letter-spacing:0.5px;">Low</div>
<div class="a" style="left:1381px;top:897px;width:197px;height:72px;background:#f0e68c;"></div>
<div class="a" style="left:1381.0px;width:197px;text-align:center;top:921.25px;font-size:28px;line-height:28px;color:#000;font-weight:normal;letter-spacing:0.5px;">Stable</div>
<div class="a" style="left:1580px;top:897px;width:233px;height:72px;background:#228b22;"></div>
<div class="a" style="left:1580.0px;width:233px;text-align:center;top:921.25px;font-size:28px;line-height:28px;color:#fff;font-weight:normal;letter-spacing:0.5px;">Strong</div>
<div class="a" style="left:1815px;top:897px;width:270px;height:72px;background:#f0e68c;"></div>
<div class="a" style="left:1815.0px;width:270px;text-align:center;top:921.25px;font-size:28px;line-height:28px;color:#000;font-weight:normal;letter-spacing:0.5px;">Stable</div>
<div class="a" style="left:2087px;top:897px;width:195px;height:72px;background:#228b22;"></div>
<div class="a" style="left:2087.0px;width:195px;text-align:center;top:921.25px;font-size:28px;line-height:28px;color:#fff;font-weight:normal;letter-spacing:0.5px;">Low</div>
<div class="a" style="left:2284px;top:897px;width:181px;height:72px;background:#f0e68c;"></div>
<div class="a" style="left:2284.0px;width:181px;text-align:center;top:921.25px;font-size:28px;line-height:28px;color:#000;font-weight:normal;letter-spacing:0.5px;"><span style="position:relative;display:inline-block;width:32px;height:1px;"><span style="position:absolute;left:1px;top:-14.5px;width:22px;height:7px;background:#000;border-radius:1.5px;"></span></span>Stable</div>
<svg class="a" style="left:2490px;top:912px" width="110" height="40" viewBox="0 0 110 40"><g fill="#26095a"><g transform="translate(6.9,33.3) rotate(-45)"><polygon points="0,0 7.4,-3.4 7.4,3.4"/><rect x="9.2" y="-3.4" width="21.4" height="6.8"/><path d="M32.6,-3.4 h3.4 a1.4,1.4 0 0 1 1.4,1.4 v4 a1.4,1.4 0 0 1 -1.4,1.4 h-3.4 z"/></g><path d="M45.2,6.5 a1.4,1.4 0 0 1 1.4,-1.4 H56.9 V14.4 a2.5,2.5 0 0 0 2.5,2.5 H66.2 V31.3 a1.4,1.4 0 0 1 -1.4,1.4 H46.6 a1.4,1.4 0 0 1 -1.4,-1.4 Z"/><polygon points="59.4,7.6 65.7,13.9 59.4,13.9"/></g><g fill="none" stroke="#26095a" stroke-width="2.2"><line x1="80.2" y1="8.4" x2="105.8" y2="8.4"/><path d="M88.9,8 V6 a2.2,2.2 0 0 1 2.2,-2.2 h5.4 a2.2,2.2 0 0 1 2.2,2.2 V8"/><path d="M84,13 H102.8 V29.6 a2,2 0 0 1 -2,2 H86 a2,2 0 0 1 -2,-2 Z"/></g><g fill="#26095a"><rect x="87.5" y="13" width="2.2" height="18"/><rect x="92.2" y="13" width="2.2" height="18"/><rect x="96.7" y="13" width="2.2" height="18"/></g></svg>
<div class="a" style="left:33px;top:971px;width:98px;height:72px;background:#f9f9f9;"></div>
<div class="a" style="left:133px;top:971px;width:539px;height:72px;background:#f9f9f9;"></div>
<div class="a" style="left:674px;top:971px;width:425px;height:72px;background:#f9f9f9;"></div>
<div class="a" style="left:2467px;top:971px;width:160px;height:72px;background:#f9f9f9;"></div>
<div class="a" style="left:49px;top:995.25px;font-size:28px;line-height:28px;color:#333;font-weight:normal;letter-spacing:0.5px;">229</div>
<div class="a" style="left:149px;top:995.25px;font-size:28px;line-height:28px;color:#333;font-weight:bold;">Liquidity</div>
<div class="a" style="left:690px;top:995.25px;font-size:28px;line-height:28px;color:#333;font-weight:normal;letter-spacing:0.5px;">Chief Financial Officer</div>
<div class="a" style="left:1101px;top:971px;width:278px;height:72px;background:#f0e68c;"></div>
<div class="a" style="left:1101.0px;width:278px;text-align:center;top:995.25px;font-size:28px;line-height:28px;color:#000;font-weight:normal;letter-spacing:0.5px;">Moderate</div>
<div class="a" style="left:1381px;top:971px;width:197px;height:72px;background:#f0e68c;"></div>
<div class="a" style="left:1381.0px;width:197px;text-align:center;top:995.25px;font-size:28px;line-height:28px;color:#000;font-weight:normal;letter-spacing:0.5px;">Stable</div>
<div class="a" style="left:1580px;top:971px;width:233px;height:72px;background:#fff49c;"></div>
<div class="a" style="left:1580.0px;width:233px;text-align:center;top:995.25px;font-size:28px;line-height:28px;color:#000;font-weight:normal;letter-spacing:0.5px;">Satisfactory</div>
<div class="a" style="left:1815px;top:971px;width:270px;height:72px;background:#f0e68c;"></div>
<div class="a" style="left:1815.0px;width:270px;text-align:center;top:995.25px;font-size:28px;line-height:28px;color:#000;font-weight:normal;letter-spacing:0.5px;">Stable</div>
<div class="a" style="left:2087px;top:971px;width:195px;height:72px;background:#f0e68c;"></div>
<div class="a" style="left:2087.0px;width:195px;text-align:center;top:995.25px;font-size:28px;line-height:28px;color:#000;font-weight:normal;letter-spacing:0.5px;">Moderate</div>
<div class="a" style="left:2284px;top:971px;width:181px;height:72px;background:#f0e68c;"></div>
<div class="a" style="left:2284.0px;width:181px;text-align:center;top:995.25px;font-size:28px;line-height:28px;color:#000;font-weight:normal;letter-spacing:0.5px;"><span style="position:relative;display:inline-block;width:32px;height:1px;"><span style="position:absolute;left:1px;top:-14.5px;width:22px;height:7px;background:#000;border-radius:1.5px;"></span></span>Stable</div>
<svg class="a" style="left:2490px;top:986px" width="110" height="40" viewBox="0 0 110 40"><g fill="#26095a"><g transform="translate(6.9,33.3) rotate(-45)"><polygon points="0,0 7.4,-3.4 7.4,3.4"/><rect x="9.2" y="-3.4" width="21.4" height="6.8"/><path d="M32.6,-3.4 h3.4 a1.4,1.4 0 0 1 1.4,1.4 v4 a1.4,1.4 0 0 1 -1.4,1.4 h-3.4 z"/></g><path d="M45.2,6.5 a1.4,1.4 0 0 1 1.4,-1.4 H56.9 V14.4 a2.5,2.5 0 0 0 2.5,2.5 H66.2 V31.3 a1.4,1.4 0 0 1 -1.4,1.4 H46.6 a1.4,1.4 0 0 1 -1.4,-1.4 Z"/><polygon points="59.4,7.6 65.7,13.9 59.4,13.9"/></g><g fill="none" stroke="#26095a" stroke-width="2.2"><line x1="80.2" y1="8.4" x2="105.8" y2="8.4"/><path d="M88.9,8 V6 a2.2,2.2 0 0 1 2.2,-2.2 h5.4 a2.2,2.2 0 0 1 2.2,2.2 V8"/><path d="M84,13 H102.8 V29.6 a2,2 0 0 1 -2,2 H86 a2,2 0 0 1 -2,-2 Z"/></g><g fill="#26095a"><rect x="87.5" y="13" width="2.2" height="18"/><rect x="92.2" y="13" width="2.2" height="18"/><rect x="96.7" y="13" width="2.2" height="18"/></g></svg>
<div class="a" style="left:33px;top:1045px;width:98px;height:72px;background:#fff;"></div>
<div class="a" style="left:133px;top:1045px;width:539px;height:72px;background:#fff;"></div>
<div class="a" style="left:674px;top:1045px;width:425px;height:72px;background:#fff;"></div>
<div class="a" style="left:2467px;top:1045px;width:160px;height:72px;background:#fff;"></div>
<div class="a" style="left:49px;top:1069.25px;font-size:28px;line-height:28px;color:#333;font-weight:normal;letter-spacing:0.5px;">230</div>
<div class="a" style="left:149px;top:1069.25px;font-size:28px;line-height:28px;color:#333;font-weight:bold;">Sensitivity to Market Risk</div>
<div class="a" style="left:690px;top:1069.25px;font-size:28px;line-height:28px;color:#333;font-weight:normal;letter-spacing:0.5px;">Chief Financial Officer</div>
<div class="a" style="left:1101px;top:1045px;width:278px;height:72px;background:#ff0000;"></div>
<div class="a" style="left:1101.0px;width:278px;text-align:center;top:1069.25px;font-size:28px;line-height:28px;color:#fff;font-weight:normal;letter-spacing:0.5px;">High</div>
<div class="a" style="left:1381px;top:1045px;width:197px;height:72px;background:#f0e68c;"></div>
<div class="a" style="left:1381.0px;width:197px;text-align:center;top:1069.25px;font-size:28px;line-height:28px;color:#000;font-weight:normal;letter-spacing:0.5px;">Stable</div>
<div class="a" style="left:1580px;top:1045px;width:233px;height:72px;background:#ff0000;"></div>
<div class="a" style="left:1580.0px;width:233px;text-align:center;top:1069.25px;font-size:28px;line-height:28px;color:#fff;font-weight:normal;letter-spacing:0.5px;">Weak</div>
<div class="a" style="left:1815px;top:1045px;width:270px;height:72px;background:#f0e68c;"></div>
<div class="a" style="left:1815.0px;width:270px;text-align:center;top:1069.25px;font-size:28px;line-height:28px;color:#000;font-weight:normal;letter-spacing:0.5px;">Stable</div>
<div class="a" style="left:2087px;top:1045px;width:195px;height:72px;background:#ff0000;"></div>
<div class="a" style="left:2087.0px;width:195px;text-align:center;top:1069.25px;font-size:28px;line-height:28px;color:#fff;font-weight:normal;letter-spacing:0.5px;">High</div>
<div class="a" style="left:2284px;top:1045px;width:181px;height:72px;background:#f0e68c;"></div>
<div class="a" style="left:2284.0px;width:181px;text-align:center;top:1069.25px;font-size:28px;line-height:28px;color:#000;font-weight:normal;letter-spacing:0.5px;"><span style="position:relative;display:inline-block;width:32px;height:1px;"><span style="position:absolute;left:1px;top:-14.5px;width:22px;height:7px;background:#000;border-radius:1.5px;"></span></span>Stable</div>
<svg class="a" style="left:2490px;top:1060px" width="110" height="40" viewBox="0 0 110 40"><g fill="#26095a"><g transform="translate(6.9,33.3) rotate(-45)"><polygon points="0,0 7.4,-3.4 7.4,3.4"/><rect x="9.2" y="-3.4" width="21.4" height="6.8"/><path d="M32.6,-3.4 h3.4 a1.4,1.4 0 0 1 1.4,1.4 v4 a1.4,1.4 0 0 1 -1.4,1.4 h-3.4 z"/></g><path d="M45.2,6.5 a1.4,1.4 0 0 1 1.4,-1.4 H56.9 V14.4 a2.5,2.5 0 0 0 2.5,2.5 H66.2 V31.3 a1.4,1.4 0 0 1 -1.4,1.4 H46.6 a1.4,1.4 0 0 1 -1.4,-1.4 Z"/><polygon points="59.4,7.6 65.7,13.9 59.4,13.9"/></g><g fill="none" stroke="#26095a" stroke-width="2.2"><line x1="80.2" y1="8.4" x2="105.8" y2="8.4"/><path d="M88.9,8 V6 a2.2,2.2 0 0 1 2.2,-2.2 h5.4 a2.2,2.2 0 0 1 2.2,2.2 V8"/><path d="M84,13 H102.8 V29.6 a2,2 0 0 1 -2,2 H86 a2,2 0 0 1 -2,-2 Z"/></g><g fill="#26095a"><rect x="87.5" y="13" width="2.2" height="18"/><rect x="92.2" y="13" width="2.2" height="18"/><rect x="96.7" y="13" width="2.2" height="18"/></g></svg>
<div class="a" style="left:33px;top:1119px;width:98px;height:72px;background:#f9f9f9;"></div>
<div class="a" style="left:133px;top:1119px;width:539px;height:72px;background:#f9f9f9;"></div>
<div class="a" style="left:674px;top:1119px;width:425px;height:72px;background:#f9f9f9;"></div>
<div class="a" style="left:2467px;top:1119px;width:160px;height:72px;background:#f9f9f9;"></div>
<div class="a" style="left:49px;top:1143.25px;font-size:28px;line-height:28px;color:#333;font-weight:normal;letter-spacing:0.5px;">231</div>
<div class="a" style="left:149px;top:1143.25px;font-size:28px;line-height:28px;color:#333;font-weight:bold;">Legal / Regulatory Compliance</div>
<div class="a" style="left:690px;top:1143.25px;font-size:28px;line-height:28px;color:#333;font-weight:normal;letter-spacing:0.5px;">Compliance Officer</div>
<div class="a" style="left:1101px;top:1119px;width:278px;height:72px;background:#228b22;"></div>
<div class="a" style="left:1101.0px;width:278px;text-align:center;top:1143.25px;font-size:28px;line-height:28px;color:#fff;font-weight:normal;letter-spacing:0.5px;">Low</div>
<div class="a" style="left:1381px;top:1119px;width:197px;height:72px;background:#f0e68c;"></div>
<div class="a" style="left:1381.0px;width:197px;text-align:center;top:1143.25px;font-size:28px;line-height:28px;color:#000;font-weight:normal;letter-spacing:0.5px;">Stable</div>
<div class="a" style="left:1580px;top:1119px;width:233px;height:72px;background:#fff49c;"></div>
<div class="a" style="left:1580.0px;width:233px;text-align:center;top:1143.25px;font-size:28px;line-height:28px;color:#000;font-weight:normal;letter-spacing:0.5px;">Satisfactory</div>
<div class="a" style="left:1815px;top:1119px;width:270px;height:72px;background:#f0e68c;"></div>
<div class="a" style="left:1815.0px;width:270px;text-align:center;top:1143.25px;font-size:28px;line-height:28px;color:#000;font-weight:normal;letter-spacing:0.5px;">Stable</div>
<div class="a" style="left:2087px;top:1119px;width:195px;height:72px;background:#228b22;"></div>
<div class="a" style="left:2087.0px;width:195px;text-align:center;top:1143.25px;font-size:28px;line-height:28px;color:#fff;font-weight:normal;letter-spacing:0.5px;">Low</div>
<div class="a" style="left:2284px;top:1119px;width:181px;height:72px;background:#f0e68c;"></div>
<div class="a" style="left:2284.0px;width:181px;text-align:center;top:1143.25px;font-size:28px;line-height:28px;color:#000;font-weight:normal;letter-spacing:0.5px;"><span style="position:relative;display:inline-block;width:32px;height:1px;"><span style="position:absolute;left:1px;top:-14.5px;width:22px;height:7px;background:#000;border-radius:1.5px;"></span></span>Stable</div>
<svg class="a" style="left:2490px;top:1134px" width="110" height="40" viewBox="0 0 110 40"><g fill="#26095a"><g transform="translate(6.9,33.3) rotate(-45)"><polygon points="0,0 7.4,-3.4 7.4,3.4"/><rect x="9.2" y="-3.4" width="21.4" height="6.8"/><path d="M32.6,-3.4 h3.4 a1.4,1.4 0 0 1 1.4,1.4 v4 a1.4,1.4 0 0 1 -1.4,1.4 h-3.4 z"/></g><path d="M45.2,6.5 a1.4,1.4 0 0 1 1.4,-1.4 H56.9 V14.4 a2.5,2.5 0 0 0 2.5,2.5 H66.2 V31.3 a1.4,1.4 0 0 1 -1.4,1.4 H46.6 a1.4,1.4 0 0 1 -1.4,-1.4 Z"/><polygon points="59.4,7.6 65.7,13.9 59.4,13.9"/></g><g fill="none" stroke="#26095a" stroke-width="2.2"><line x1="80.2" y1="8.4" x2="105.8" y2="8.4"/><path d="M88.9,8 V6 a2.2,2.2 0 0 1 2.2,-2.2 h5.4 a2.2,2.2 0 0 1 2.2,2.2 V8"/><path d="M84,13 H102.8 V29.6 a2,2 0 0 1 -2,2 H86 a2,2 0 0 1 -2,-2 Z"/></g><g fill="#26095a"><rect x="87.5" y="13" width="2.2" height="18"/><rect x="92.2" y="13" width="2.2" height="18"/><rect x="96.7" y="13" width="2.2" height="18"/></g></svg>
<div class="a" style="left:33px;top:1193px;width:98px;height:72px;background:#fff;"></div>
<div class="a" style="left:133px;top:1193px;width:539px;height:72px;background:#fff;"></div>
<div class="a" style="left:674px;top:1193px;width:425px;height:72px;background:#fff;"></div>
<div class="a" style="left:2467px;top:1193px;width:160px;height:72px;background:#fff;"></div>
<div class="a" style="left:49px;top:1217.25px;font-size:28px;line-height:28px;color:#333;font-weight:normal;letter-spacing:0.5px;">232</div>
<div class="a" style="left:149px;top:1217.25px;font-size:28px;line-height:28px;color:#333;font-weight:bold;">Operational / Technology</div>
<div class="a" style="left:690px;top:1217.25px;font-size:28px;line-height:28px;color:#333;font-weight:normal;letter-spacing:0.5px;">Chief Operations Officer</div>
<div class="a" style="left:1101px;top:1193px;width:278px;height:72px;background:#228b22;"></div>
<div class="a" style="left:1101.0px;width:278px;text-align:center;top:1217.25px;font-size:28px;line-height:28px;color:#fff;font-weight:normal;letter-spacing:0.5px;">Low</div>
<div class="a" style="left:1381px;top:1193px;width:197px;height:72px;background:#f0e68c;"></div>
<div class="a" style="left:1381.0px;width:197px;text-align:center;top:1217.25px;font-size:28px;line-height:28px;color:#000;font-weight:normal;letter-spacing:0.5px;">Stable</div>
<div class="a" style="left:1580px;top:1193px;width:233px;height:72px;background:#228b22;"></div>
<div class="a" style="left:1580.0px;width:233px;text-align:center;top:1217.25px;font-size:28px;line-height:28px;color:#fff;font-weight:normal;letter-spacing:0.5px;">Strong</div>
<div class="a" style="left:1815px;top:1193px;width:270px;height:72px;background:#f0e68c;"></div>
<div class="a" style="left:1815.0px;width:270px;text-align:center;top:1217.25px;font-size:28px;line-height:28px;color:#000;font-weight:normal;letter-spacing:0.5px;">Stable</div>
<div class="a" style="left:2087px;top:1193px;width:195px;height:72px;background:#228b22;"></div>
<div class="a" style="left:2087.0px;width:195px;text-align:center;top:1217.25px;font-size:28px;line-height:28px;color:#fff;font-weight:normal;letter-spacing:0.5px;">Low</div>
<div class="a" style="left:2284px;top:1193px;width:181px;height:72px;background:#f0e68c;"></div>
<div class="a" style="left:2284.0px;width:181px;text-align:center;top:1217.25px;font-size:28px;line-height:28px;color:#000;font-weight:normal;letter-spacing:0.5px;"><span style="position:relative;display:inline-block;width:32px;height:1px;"><span style="position:absolute;left:1px;top:-14.5px;width:22px;height:7px;background:#000;border-radius:1.5px;"></span></span>Stable</div>
<svg class="a" style="left:2490px;top:1208px" width="110" height="40" viewBox="0 0 110 40"><g fill="#26095a"><g transform="translate(6.9,33.3) rotate(-45)"><polygon points="0,0 7.4,-3.4 7.4,3.4"/><rect x="9.2" y="-3.4" width="21.4" height="6.8"/><path d="M32.6,-3.4 h3.4 a1.4,1.4 0 0 1 1.4,1.4 v4 a1.4,1.4 0 0 1 -1.4,1.4 h-3.4 z"/></g><path d="M45.2,6.5 a1.4,1.4 0 0 1 1.4,-1.4 H56.9 V14.4 a2.5,2.5 0 0 0 2.5,2.5 H66.2 V31.3 a1.4,1.4 0 0 1 -1.4,1.4 H46.6 a1.4,1.4 0 0 1 -1.4,-1.4 Z"/><polygon points="59.4,7.6 65.7,13.9 59.4,13.9"/></g><g fill="none" stroke="#26095a" stroke-width="2.2"><line x1="80.2" y1="8.4" x2="105.8" y2="8.4"/><path d="M88.9,8 V6 a2.2,2.2 0 0 1 2.2,-2.2 h5.4 a2.2,2.2 0 0 1 2.2,2.2 V8"/><path d="M84,13 H102.8 V29.6 a2,2 0 0 1 -2,2 H86 a2,2 0 0 1 -2,-2 Z"/></g><g fill="#26095a"><rect x="87.5" y="13" width="2.2" height="18"/><rect x="92.2" y="13" width="2.2" height="18"/><rect x="96.7" y="13" width="2.2" height="18"/></g></svg>
<div class="a" style="left:33px;top:1267px;width:98px;height:72px;background:#f9f9f9;"></div>
<div class="a" style="left:133px;top:1267px;width:539px;height:72px;background:#f9f9f9;"></div>
<div class="a" style="left:674px;top:1267px;width:425px;height:72px;background:#f9f9f9;"></div>
<div class="a" style="left:2467px;top:1267px;width:160px;height:72px;background:#f9f9f9;"></div>
<div class="a" style="left:49px;top:1291.25px;font-size:28px;line-height:28px;color:#333;font-weight:normal;letter-spacing:0.5px;">233</div>
<div class="a" style="left:149px;top:1291.25px;font-size:28px;line-height:28px;color:#333;font-weight:bold;">Reputation / Strategic</div>
<div class="a" style="left:690px;top:1291.25px;font-size:28px;line-height:28px;color:#333;font-weight:normal;letter-spacing:0.5px;">Chief Executive Officer</div>
<div class="a" style="left:1101px;top:1267px;width:278px;height:72px;background:#228b22;"></div>
<div class="a" style="left:1101.0px;width:278px;text-align:center;top:1291.25px;font-size:28px;line-height:28px;color:#fff;font-weight:normal;letter-spacing:0.5px;">Low</div>
<div class="a" style="left:1381px;top:1267px;width:197px;height:72px;background:#f0e68c;"></div>
<div class="a" style="left:1381.0px;width:197px;text-align:center;top:1291.25px;font-size:28px;line-height:28px;color:#000;font-weight:normal;letter-spacing:0.5px;">Stable</div>
<div class="a" style="left:1580px;top:1267px;width:233px;height:72px;background:#fff49c;"></div>
<div class="a" style="left:1580.0px;width:233px;text-align:center;top:1291.25px;font-size:28px;line-height:28px;color:#000;font-weight:normal;letter-spacing:0.5px;">Satisfactory</div>
<div class="a" style="left:1815px;top:1267px;width:270px;height:72px;background:#f0e68c;"></div>
<div class="a" style="left:1815.0px;width:270px;text-align:center;top:1291.25px;font-size:28px;line-height:28px;color:#000;font-weight:normal;letter-spacing:0.5px;">Stable</div>
<div class="a" style="left:2087px;top:1267px;width:195px;height:72px;background:#228b22;"></div>
<div class="a" style="left:2087.0px;width:195px;text-align:center;top:1291.25px;font-size:28px;line-height:28px;color:#fff;font-weight:normal;letter-spacing:0.5px;">Low</div>
<div class="a" style="left:2284px;top:1267px;width:181px;height:72px;background:#f0e68c;"></div>
<div class="a" style="left:2284.0px;width:181px;text-align:center;top:1291.25px;font-size:28px;line-height:28px;color:#000;font-weight:normal;letter-spacing:0.5px;"><span style="position:relative;display:inline-block;width:32px;height:1px;"><span style="position:absolute;left:1px;top:-14.5px;width:22px;height:7px;background:#000;border-radius:1.5px;"></span></span>Stable</div>
<svg class="a" style="left:2490px;top:1282px" width="110" height="40" viewBox="0 0 110 40"><g fill="#26095a"><g transform="translate(6.9,33.3) rotate(-45)"><polygon points="0,0 7.4,-3.4 7.4,3.4"/><rect x="9.2" y="-3.4" width="21.4" height="6.8"/><path d="M32.6,-3.4 h3.4 a1.4,1.4 0 0 1 1.4,1.4 v4 a1.4,1.4 0 0 1 -1.4,1.4 h-3.4 z"/></g><path d="M45.2,6.5 a1.4,1.4 0 0 1 1.4,-1.4 H56.9 V14.4 a2.5,2.5 0 0 0 2.5,2.5 H66.2 V31.3 a1.4,1.4 0 0 1 -1.4,1.4 H46.6 a1.4,1.4 0 0 1 -1.4,-1.4 Z"/><polygon points="59.4,7.6 65.7,13.9 59.4,13.9"/></g><g fill="none" stroke="#26095a" stroke-width="2.2"><line x1="80.2" y1="8.4" x2="105.8" y2="8.4"/><path d="M88.9,8 V6 a2.2,2.2 0 0 1 2.2,-2.2 h5.4 a2.2,2.2 0 0 1 2.2,2.2 V8"/><path d="M84,13 H102.8 V29.6 a2,2 0 0 1 -2,2 H86 a2,2 0 0 1 -2,-2 Z"/></g><g fill="#26095a"><rect x="87.5" y="13" width="2.2" height="18"/><rect x="92.2" y="13" width="2.2" height="18"/><rect x="96.7" y="13" width="2.2" height="18"/></g></svg>
<div class="a" style="left:33px;top:1341px;width:98px;height:72px;background:#fff;"></div>
<div class="a" style="left:133px;top:1341px;width:539px;height:72px;background:#fff;"></div>
<div class="a" style="left:674px;top:1341px;width:425px;height:72px;background:#fff;"></div>
<div class="a" style="left:2467px;top:1341px;width:160px;height:72px;background:#fff;"></div>
<div class="a" style="left:49px;top:1365.25px;font-size:28px;line-height:28px;color:#333;font-weight:normal;letter-spacing:0.5px;">234</div>
<div class="a" style="left:149px;top:1365.25px;font-size:28px;line-height:28px;color:#333;font-weight:bold;">Trust</div>
<div class="a" style="left:690px;top:1365.25px;font-size:28px;line-height:28px;color:#333;font-weight:normal;letter-spacing:0.5px;">EVP - Trust</div>
<div class="a" style="left:1101px;top:1341px;width:278px;height:72px;background:#f0e68c;"></div>
<div class="a" style="left:1101.0px;width:278px;text-align:center;top:1365.25px;font-size:28px;line-height:28px;color:#000;font-weight:normal;letter-spacing:0.5px;">Moderate</div>
<div class="a" style="left:1381px;top:1341px;width:197px;height:72px;background:#f0e68c;"></div>
<div class="a" style="left:1381.0px;width:197px;text-align:center;top:1365.25px;font-size:28px;line-height:28px;color:#000;font-weight:normal;letter-spacing:0.5px;">Stable</div>
<div class="a" style="left:1580px;top:1341px;width:233px;height:72px;background:#228b22;"></div>
<div class="a" style="left:1580.0px;width:233px;text-align:center;top:1365.25px;font-size:28px;line-height:28px;color:#fff;font-weight:normal;letter-spacing:0.5px;">Strong</div>
<div class="a" style="left:1815px;top:1341px;width:270px;height:72px;background:#228b22;"></div>
<div class="a" style="left:1815.0px;width:270px;text-align:center;top:1365.25px;font-size:28px;line-height:28px;color:#fff;font-weight:normal;letter-spacing:0.5px;"><span style="position:relative;display:inline-block;width:37px;height:1px;"><svg width="28" height="28" viewBox="0 0 28 28" style="position:absolute;left:0;top:-25px;"><circle cx="14" cy="14" r="13.6" fill="#fff"/><rect x="12" y="6.5" width="4.2" height="8" fill="#228b22"/><polygon points="7.5,14 20.5,14 14,22" fill="#228b22"/></svg></span>Decreasing</div>
<div class="a" style="left:2087px;top:1341px;width:195px;height:72px;background:#f0e68c;"></div>
<div class="a" style="left:2087.0px;width:195px;text-align:center;top:1365.25px;font-size:28px;line-height:28px;color:#000;font-weight:normal;letter-spacing:0.5px;">Moderate</div>
<div class="a" style="left:2284px;top:1341px;width:181px;height:72px;background:#f0e68c;"></div>
<div class="a" style="left:2284.0px;width:181px;text-align:center;top:1365.25px;font-size:28px;line-height:28px;color:#000;font-weight:normal;letter-spacing:0.5px;"><span style="position:relative;display:inline-block;width:32px;height:1px;"><span style="position:absolute;left:1px;top:-14.5px;width:22px;height:7px;background:#000;border-radius:1.5px;"></span></span>Stable</div>
<svg class="a" style="left:2490px;top:1356px" width="110" height="40" viewBox="0 0 110 40"><g fill="#26095a"><g transform="translate(6.9,33.3) rotate(-45)"><polygon points="0,0 7.4,-3.4 7.4,3.4"/><rect x="9.2" y="-3.4" width="21.4" height="6.8"/><path d="M32.6,-3.4 h3.4 a1.4,1.4 0 0 1 1.4,1.4 v4 a1.4,1.4 0 0 1 -1.4,1.4 h-3.4 z"/></g><path d="M45.2,6.5 a1.4,1.4 0 0 1 1.4,-1.4 H56.9 V14.4 a2.5,2.5 0 0 0 2.5,2.5 H66.2 V31.3 a1.4,1.4 0 0 1 -1.4,1.4 H46.6 a1.4,1.4 0 0 1 -1.4,-1.4 Z"/><polygon points="59.4,7.6 65.7,13.9 59.4,13.9"/></g><g fill="none" stroke="#26095a" stroke-width="2.2"><line x1="80.2" y1="8.4" x2="105.8" y2="8.4"/><path d="M88.9,8 V6 a2.2,2.2 0 0 1 2.2,-2.2 h5.4 a2.2,2.2 0 0 1 2.2,2.2 V8"/><path d="M84,13 H102.8 V29.6 a2,2 0 0 1 -2,2 H86 a2,2 0 0 1 -2,-2 Z"/></g><g fill="#26095a"><rect x="87.5" y="13" width="2.2" height="18"/><rect x="92.2" y="13" width="2.2" height="18"/><rect x="96.7" y="13" width="2.2" height="18"/></g></svg>
<div class="a" style="left:31px;top:1463.25px;font-size:28px;line-height:28px;color:#333;font-weight:normal;">This initial risk assessment for Financial Institution, as of December 31, 2018, was prepared for the Board of Directors by Senior Management.</div>
<div class="a" style="left:32px;top:1538.25px;font-size:28px;line-height:28px;color:#333;font-weight:bold;-webkit-text-stroke:1px #333;transform:scaleX(1.1);transform-origin:0 0;">Background</div>
<div class="a" style="left:31px;top:1611.75px;font-size:28px;line-height:28px;color:#333;font-weight:normal;">In order to exceed regulatory requirements and fulfill its fiduciary responsibilities, bank management has developed a more robust process for identifying, measuring, monitoring, and managing risk,</div>
<div class="a" style="left:31px;top:1655.75px;font-size:28px;line-height:28px;color:#333;font-weight:normal;">commensurate with the size, complexity, and geographic diversity of the bank. This new system allows management to evaluate, in an efficient and thorough manner, hundreds of key risk indicators (risk issues)</div>
<div class="a" style="left:31px;top:1699.75px;font-size:28px;line-height:28px;color:#333;font-weight:normal;">confronted each day. Eight primary categories of risk are used: Credit, Interest Rate, Liquidity, Price, Operational, Compliance, Strategic, and Reputation. Consistent with regulatory expectations, the Inherent</div>
</body></html>
